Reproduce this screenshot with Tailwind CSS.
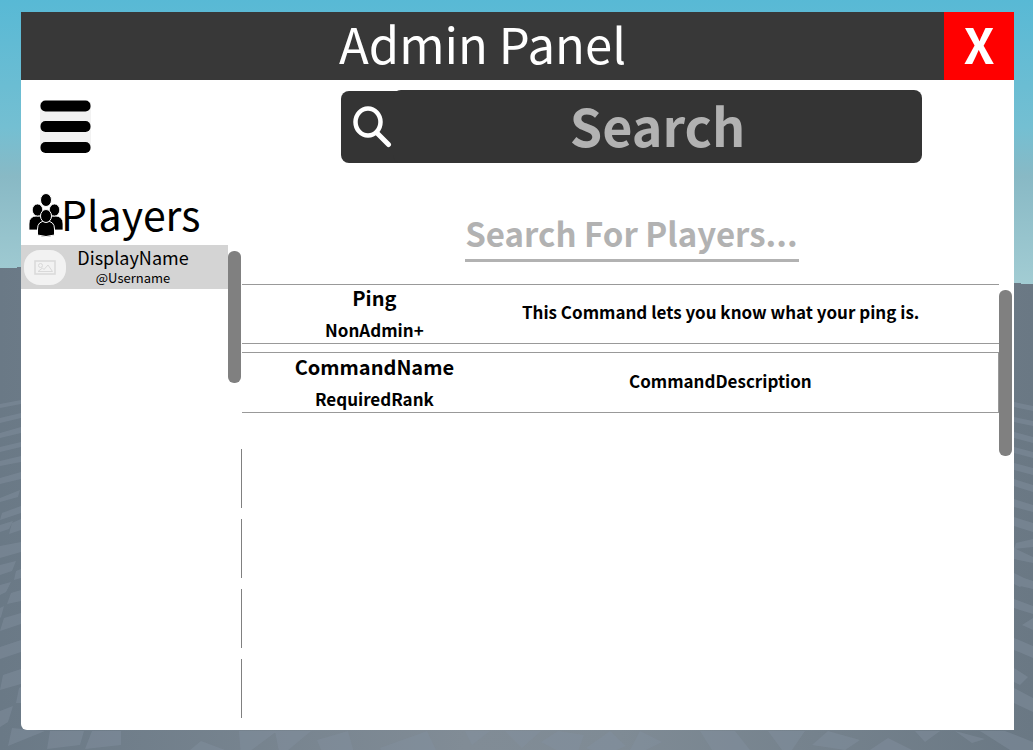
<!DOCTYPE html>
<html lang="en">
<head>
  <meta charset="UTF-8">
  <meta name="viewport" content="width=device-width, initial-scale=1.0">
  <title>Admin Panel</title>
  <script src="https://cdn.jsdelivr.net/npm/@tailwindcss/browser@4"></script>
</head>
<body class="relative flex min-h-screen bg-[#6b7a88] pt-3 pr-[19px] pb-5 pl-[21px] font-['Noto_Sans_CJK_SC',sans-serif] text-black">
  <!-- Sky and baseplate -->
  <svg class="absolute inset-0 h-full w-full" viewBox="0 0 1033 750" preserveAspectRatio="none" aria-hidden="true">
    <defs>
      <linearGradient id="sky" x1="0" y1="0" x2="0" y2="1">
        <stop offset="0" stop-color="#58b9d5" />
        <stop offset="0.45" stop-color="#74bfd2" />
        <stop offset="0.62" stop-color="#88b9c5" />
        <stop offset="1" stop-color="#a2ccd3" />
      </linearGradient>
      <linearGradient id="ground" x1="0" y1="0" x2="1" y2="0">
        <stop offset="0" stop-color="#6a7986" />
        <stop offset="0.45" stop-color="#818c96" />
        <stop offset="0.6" stop-color="#7f8b95" />
        <stop offset="1" stop-color="#6a7884" />
      </linearGradient>
    </defs>
    <rect width="1033" height="284" fill="url(#sky)" />
    <path d="M0 268L17 268L17 267L500 267L500 283L1021 283L1021 284L1033 284V750H0z" fill="url(#ground)" />
    <g fill="#8391a0" fill-opacity="0.45">
      <path d="M0 404L21 400V404L0 408zM0 418L21 413V418L0 423zM0 433L21 427V433L0 438zM0 447L21 442V447L0 452zM0 461L21 456V462L0 466zM0 478L21 472V479L0 484z" />
      <path d="M0 498L20 490L18 497L0 502zM2 513L21 506V513L0 520zM0 525L13 521L9 529L0 532zM12 523L21 519V530L9 534zM0 546L21 542V552L0 558z" />
      <path d="M0 565L16 561L12 571L0 575zM16 571L21 569V578L14 580zM0 585L11 582L6 592L0 595zM11 593L21 590V601L7 604zM0 608L4 606L1 617L0 618z" />
      <path d="M4 618L21 613V624L0 631zM0 647L21 640V652L0 659zM3 675L21 669V684L0 690zM0 711L13 706L8 722L0 727zM19 688L21 687V703L16 703z" />
      <path d="M12 728L45 731L8 746zM50 731H84L80 745L47 749zM92 731H121V745L85 749zM201 741L225 750H190zM239 731L277 731L241 758zM275 731H311L280 757zM317 740L348 731L356 760L327 764zM380 748L427 731L437 752L395 775zM465 731L490 731L472 745zM505 731H541L522 748zM541 742L558 731L584 735L575 760zM586 748L610 731L626 746L605 755zM640 731L662 742L646 750H630zM700 731H735L750 750H712zM768 731H805L792 750H782zM812 745L828 731L860 740L845 750zM870 750L888 738L912 750zM915 731L940 731L925 742zM955 731L985 739L972 743zM980 731H1005L1033 742V750H1010z" />
      <path d="M1014 402L1033 406V411L1014 407zM1014 417L1033 421V426L1014 422zM1014 432L1033 437V443L1014 438zM1014 447L1033 452V458L1014 453zM1014 463L1033 468V475L1014 470zM1014 479L1033 485V492L1014 486z" />
      <path d="M1014 499L1033 505V512L1014 507zM1014 517L1033 523V532L1014 526zM1016 543L1033 539V547L1014 549zM1014 548L1033 557V563L1014 559zM1014 573L1028 580L1020 587L1014 584zM1024 578L1033 581V589L1020 586zM1014 599L1033 606V614L1014 608zM1022 625L1033 618V630zM1014 638L1033 646V658L1014 650zM1014 668L1028 677L1020 685L1014 682zM1014 688L1033 698V712L1014 703z" />
    </g>
  </svg>

  <main class="relative flex flex-1 flex-col rounded-bl-md bg-white">
    <header class="flex h-17 bg-[#383838] text-white">
      <h1 class="flex-1 text-center text-[49px] leading-[62px]">Admin Panel</h1>
      <button type="button" class="w-[70px] bg-[#ff0000] pb-1.5 text-[49px] leading-[62px] font-bold">X</button>
    </header>

    <!-- Toolbar -->
    <div class="flex justify-between pt-[10px] pr-[92px] pl-[19px]">
      <button type="button" aria-label="Menu" class="mt-2.5 h-[53px]">
        <svg class="h-[53px] w-[51px]" viewBox="0 0 51 53">
          <rect y="2" width="51" height="48" fill="#f2f2f2" />
          <rect x="0.5" y="0.5" width="50" height="11" rx="5" />
          <rect x="0.5" y="21" width="50" height="11" rx="5" />
          <rect x="0.5" y="42" width="50" height="11" rx="5" />
        </svg>
      </button>
      <div class="flex w-[66%] max-w-[581px]">
        <label for="search" class="mt-px w-[62px] shrink-0 rounded-l-lg bg-[#343434]">
          <svg class="mt-3.5 ml-3 h-[43px] w-[39px]" viewBox="0 0 39 43" fill="none" stroke="#fff" stroke-linecap="round" role="img" aria-label="Search">
            <ellipse cx="15" cy="17" rx="12.5" ry="13.5" stroke-width="4.500" />
            <path d="M24 28L35.500 39.500" stroke-width="5" />
          </svg>
        </label>
        <input id="search" type="text" placeholder="Search" class="-ml-2.5 h-[73px] min-w-0 flex-1 rounded-lg bg-[#343434] pb-1 text-center text-[52px] font-bold text-white outline-none placeholder:text-[#b2b2b2]">
      </div>
    </div>

    <div class="flex flex-1 pt-[23px]">
      <!-- Players -->
      <aside class="w-[207px] shrink-0">
        <h2 class="flex h-[59px] pl-2 text-[41px] leading-[55px]">
          <svg class="mt-[7px] h-11 w-[34px] shrink-0" viewBox="0 0 34 44" stroke="#fff" aria-hidden="true">
            <path d="M9 20Q17 13 25 20V30H9z" stroke="none" />
            <ellipse cx="17" cy="7" rx="5.500" ry="6.500" />
            <path d="M0 37V31Q0 23 8 23Q14 23 14 30V37z" stroke-width="0.800" />
            <path d="M34 37V31Q34 23 26 23Q20 23 20 30V37z" stroke-width="0.800" />
            <ellipse cx="8.500" cy="17" rx="5.200" ry="6" stroke-width="0.800" />
            <ellipse cx="25.500" cy="17" rx="5.200" ry="6" stroke-width="0.800" />
            <path d="M8.500 42V36Q8.500 28 17 28Q25.500 28 25.500 36V42Q17 45 8.500 42z" />
            <ellipse cx="17" cy="23" rx="5.500" ry="6.500" />
          </svg>
          <span class="-ml-0.5">Players</span>
        </h2>
        <ul>
          <li class="flex h-11 items-center bg-[#d4d4d4] pl-[3px]">
            <svg class="h-[35px] w-[42px] shrink-0" viewBox="0 0 42 35" fill="none" stroke="#d9d9d9" aria-hidden="true">
              <rect width="42" height="35" rx="16" fill="#f2f2f2" stroke="none" />
              <rect x="11" y="11" width="20" height="13" stroke-width="1.500" />
              <circle cx="16.500" cy="15.500" r="2" />
              <path d="M14 21.500L18.500 18L20 19.500L24 15L28.500 21.500H14" />
            </svg>
            <div class="flex-1 pr-7 text-center">
              <p class="text-[18px] leading-[22px]">DisplayName</p>
              <p class="text-[13px] leading-[20px]">@Username</p>
            </div>
          </li>
        </ul>
      </aside>
      <div class="mt-[65px] h-[132px] w-[13px] shrink-0 rounded-md bg-[#808080]"></div>

      <!-- Commands -->
      <section class="min-w-0 flex-1">
        <div class="mt-7 flex justify-center pl-2">
          <input type="text" aria-label="Search For Players" placeholder="Search For Players..." class="h-12 w-[334px] border-b-3 border-[#b2b2b2] pb-1.5 text-center text-[33px] font-bold outline-none placeholder:text-[#b2b2b2]">
        </div>
        <div class="flex">
          <div class="min-w-0 flex-1 pt-[22px]">
            <table class="ml-px w-[calc(100%-1px)] table-fixed border-collapse text-center font-bold">
              <tbody>
                <tr class="h-[59px] border-y border-[#999999]">
                  <th scope="row" class="w-[35%] p-0">
                    <p class="text-[20px] leading-[26px]">Ping</p>
                    <p class="pt-1.5 text-[17px] leading-[26px]">NonAdmin+</p>
                  </th>
                  <td class="p-0 pr-16 pb-1 text-[17px]">This Command lets you know what your ping is.</td>
                </tr>
                <tr class="h-[9px]" aria-hidden="true"><td colspan="2" class="p-0"></td></tr>
                <tr class="h-15 border-y border-r border-[#999999]">
                  <th scope="row" class="p-0">
                    <p class="text-[20px] leading-[26px]">CommandName</p>
                    <p class="pt-1.5 text-[17px] leading-[26px]">RequiredRank</p>
                  </th>
                  <td class="p-0 pr-16 pb-1 text-[17px]">CommandDescription</td>
                </tr>
              </tbody>
            </table>
            <!-- Empty command slots -->
            <div class="mt-9 flex flex-col gap-[11px]">
              <div class="h-[59px] border-l border-[#808080]"></div>
              <div class="h-[59px] border-l border-[#808080]"></div>
              <div class="h-[59px] border-l border-[#808080]"></div>
              <div class="h-[59px] border-l border-[#808080]"></div>
            </div>
          </div>
          <div class="mt-7 mr-0.5 h-[166px] w-[13px] shrink-0 rounded-md bg-[#808080]"></div>
        </div>
      </section>
    </div>
  </main>
</body>
</html>
